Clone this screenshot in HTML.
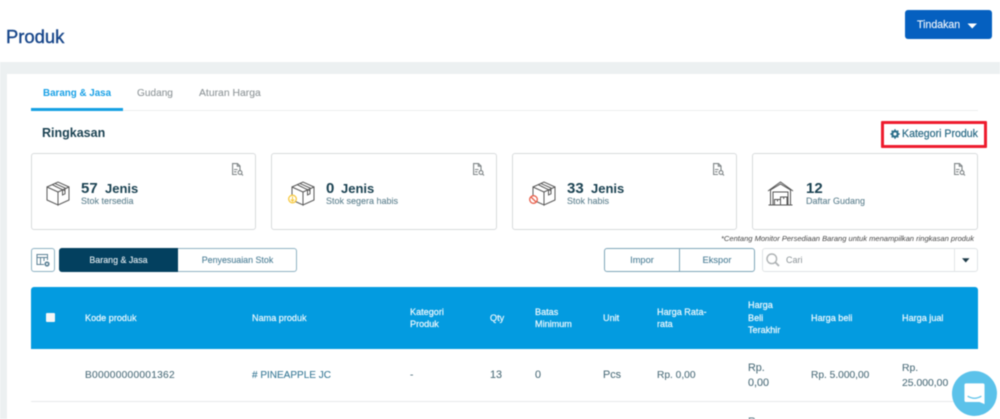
<!DOCTYPE html>
<html lang="id">
<head>
<meta charset="utf-8">
<title>Produk</title>
<style>
html,body{margin:0;padding:0;width:1000px;height:419px;overflow:hidden;background:#fff;font-family:"Liberation Sans",sans-serif}
#p{position:relative;width:1000px;height:419px;overflow:hidden;filter:blur(.4px)}
#p div,#p svg{position:absolute}
.t{white-space:nowrap;line-height:1}
.card{box-sizing:border-box;top:153px;height:77px;border:1px solid #d8dbdc;border-radius:3px;background:#fff}
.n{font-weight:bold;font-size:15px;color:#1b4252;top:181px}
.j{font-weight:bold;font-size:13px;color:#1b4252;top:182px}
.s{font-size:9px;color:#5f8290;top:197px;-webkit-text-stroke:.1px #5f8290}
.h{font-size:9.1px;color:#eef8fd;line-height:12.7px;white-space:nowrap;-webkit-text-stroke:.2px #eef8fd}
.c{font-size:10.2px;color:#4f6f7c;line-height:15px;white-space:nowrap;-webkit-text-stroke:.1px #4f6f7c}
.btn{box-sizing:border-box;top:248px;height:24px;border:1px solid #7fa7ba;text-align:center;font-size:9.3px;color:#4f8098;line-height:22px;-webkit-text-stroke:.1px #4f8098}
</style>
</head>
<body>
<div id="p">
<div style="left:0;top:62px;width:1000px;height:12px;background:#ecf0f1"></div>
<div style="left:0;top:62px;width:7px;height:357px;background:#ecf0f1"></div>

<div class="t" style="left:6px;top:28px;font-size:18.400px;color:#17468a;-webkit-text-stroke:.4px #17468a">Produk</div>
<div style="left:905px;top:10px;width:87px;height:29px;background:#0560c0;border-radius:3px"></div>
<div class="t" style="left:917px;top:19.500px;font-size:10.600px;color:#eef4fb;-webkit-text-stroke:.15px #eef4fb">Tindakan</div>
<svg style="left:967px;top:22.500px" width="11" height="6" viewBox="0 0 11 6"><path d="M0.500 0.500H10L5.200 5.500z" fill="#fff"/></svg>

<div class="t" style="left:43px;top:89px;font-size:9.800px;font-weight:bold;color:#18a0e6">Barang &amp; Jasa</div>
<div class="t" style="left:137px;top:89px;font-size:10.100px;color:#8f9699;-webkit-text-stroke:.1px #8f9699">Gudang</div>
<div class="t" style="left:199px;top:89px;font-size:10.400px;color:#8f9699;-webkit-text-stroke:.1px #8f9699">Aturan Harga</div>
<div style="left:31px;top:110px;width:947px;height:1px;background:#eceeef"></div>
<div style="left:31px;top:108px;width:92px;height:2.500px;background:#15a0e3"></div>

<div class="t" style="left:42px;top:127px;font-size:12.500px;font-weight:bold;color:#1b4252">Ringkasan</div>

<div style="box-sizing:border-box;left:881px;top:121px;width:106px;height:27px;border:3px solid #ee1c2e;border-radius:1px"></div>
<svg style="left:890px;top:129px" width="10" height="10" viewBox="0 0 10 10"><circle cx="5" cy="5" r="2.700" fill="none" stroke="#2a6f8a" stroke-width="2.200"/><path d="M5 .3V2M5 8V9.700M.3 5H2M8 5H9.700M1.700 1.700L3 3M7 7L8.300 8.300M8.300 1.700L7 3M3 7L1.700 8.300" stroke="#2a6f8a" stroke-width="1.500"/></svg>
<div class="t" style="left:902px;top:129px;font-size:10.600px;color:#2a6a85;-webkit-text-stroke:.2px #2a6a85">Kategori Produk</div>

<div class="card" style="left:31px;width:225px"></div>
<div class="card" style="left:271px;width:226px"></div>
<div class="card" style="left:512px;width:225px"></div>
<div class="card" style="left:752px;width:226px"></div>

<svg style="left:232px;top:163px" width="12" height="13" viewBox="0 0 12 13"><path d="M8 7.500V3L5.500 .6H.6V11.500H5M5.300 .6V3.200H8" fill="none" stroke="#7f8587" stroke-width="1.100"/><path d="M2 6.500H5.500M2 8.800H4.500" stroke="#7f8587" stroke-width="1.100"/><circle cx="8" cy="9.500" r="1.900" fill="#fff" stroke="#7f8587" stroke-width="1.100"/><path d="M9.400 10.900L11 12.500" stroke="#7f8587" stroke-width="1.100"/></svg>
<svg style="left:473px;top:163px" width="12" height="13" viewBox="0 0 12 13"><path d="M8 7.500V3L5.500 .6H.6V11.500H5M5.300 .6V3.200H8" fill="none" stroke="#7f8587" stroke-width="1.100"/><path d="M2 6.500H5.500M2 8.800H4.500" stroke="#7f8587" stroke-width="1.100"/><circle cx="8" cy="9.500" r="1.900" fill="#fff" stroke="#7f8587" stroke-width="1.100"/><path d="M9.400 10.900L11 12.500" stroke="#7f8587" stroke-width="1.100"/></svg>
<svg style="left:713px;top:163px" width="12" height="13" viewBox="0 0 12 13"><path d="M8 7.500V3L5.500 .6H.6V11.500H5M5.300 .6V3.200H8" fill="none" stroke="#7f8587" stroke-width="1.100"/><path d="M2 6.500H5.500M2 8.800H4.500" stroke="#7f8587" stroke-width="1.100"/><circle cx="8" cy="9.500" r="1.900" fill="#fff" stroke="#7f8587" stroke-width="1.100"/><path d="M9.400 10.900L11 12.500" stroke="#7f8587" stroke-width="1.100"/></svg>
<svg style="left:954px;top:163px" width="12" height="13" viewBox="0 0 12 13"><path d="M8 7.500V3L5.500 .6H.6V11.500H5M5.300 .6V3.200H8" fill="none" stroke="#7f8587" stroke-width="1.100"/><path d="M2 6.500H5.500M2 8.800H4.500" stroke="#7f8587" stroke-width="1.100"/><circle cx="8" cy="9.500" r="1.900" fill="#fff" stroke="#7f8587" stroke-width="1.100"/><path d="M9.400 10.900L11 12.500" stroke="#7f8587" stroke-width="1.100"/></svg>

<svg style="left:46px;top:181px" width="25" height="25" viewBox="0 0 25 25"><g fill="none" stroke="#5a5a5a" stroke-width="1"><path d="M1 6L12 11V24L1 19zM23 6L12 11V24L23 19zM1 6L12 1L23 6"/><path d="M6 3.500L16.500 8.800V14L19 12.800V7L8.500 2.300M9 5.200L19 9.800"/></g></svg>
<svg style="left:286px;top:181px" width="30" height="25" viewBox="0 0 30 25"><g fill="none" stroke="#5a5a5a" stroke-width="1"><path d="M6 6L17 11V24L6 19zM28 6L17 11V24L28 19zM6 6L17 1L28 6"/><path d="M11 3.500L21.500 8.800V14L24 12.800V7L13.500 2.300M14 5.200L24 9.800"/></g><circle cx="6.500" cy="18" r="3.800" fill="#fff" stroke="#f7c93e" stroke-width="1.300"/><path d="M6.500 15.500V20M4.800 18.500L6.500 20.300L8.200 18.500" fill="none" stroke="#f7c93e"/></svg>
<svg style="left:527px;top:181px" width="30" height="25" viewBox="0 0 30 25"><g fill="none" stroke="#5a5a5a" stroke-width="1"><path d="M6 6L17 11V24L6 19zM28 6L17 11V24L28 19zM6 6L17 1L28 6"/><path d="M11 3.500L21.500 8.800V14L24 12.800V7L13.500 2.300M14 5.200L24 9.800"/></g><circle cx="6.500" cy="18.500" r="3.800" fill="#fff" stroke="#e8604c" stroke-width="1.300"/><path d="M4 16L9 21" stroke="#e8604c" stroke-width="1.300"/></svg>
<svg style="left:767px;top:181px" width="27" height="25" viewBox="0 0 27 25"><g fill="none" stroke="#555" stroke-width="1"><path d="M1 10L13.500 1L26 10M3.500 24V9L13.500 3L23.500 9V24M6 24V11H21V24M1.500 24H25.500"/><rect x="7.500" y="18.500" width="6" height="5.500"/><rect x="13.500" y="16" width="6.500" height="8"/><path d="M10.500 18.500V20.500M16.700 16V18"/></g></svg>

<div class="t n" style="left:81px">57</div><div class="t j" style="left:105px">Jenis</div>
<div class="t s" style="left:81px">Stok tersedia</div>
<div class="t n" style="left:326px">0</div><div class="t j" style="left:341px">Jenis</div>
<div class="t s" style="left:326px">Stok segera habis</div>
<div class="t n" style="left:567px">33</div><div class="t j" style="left:591px">Jenis</div>
<div class="t s" style="left:567px">Stok habis</div>
<div class="t n" style="left:806px">12</div>
<div class="t s" style="left:806px">Daftar Gudang</div>

<div class="t" style="left:721px;top:234.500px;font-size:7.560px;font-style:italic;color:#444">*Centang Monitor Persediaan Barang untuk menampilkan ringkasan produk</div>

<div style="box-sizing:border-box;left:31px;top:248px;width:24px;height:24px;border:1px solid #8fb3c4;border-radius:3px"></div>
<svg style="left:36px;top:253px" width="15" height="15" viewBox="0 0 15 15"><g fill="none" stroke="#5d8296"><path d="M8 11.500H1V1.500H11.500V7M1 4.500H11.500M4.500 4.500V11.500M8 4.500V8"/><circle cx="11" cy="11" r="1.800" stroke-width="1.600"/></g></svg>

<div style="box-sizing:border-box;left:59px;top:248px;width:238px;height:24px;border:1px solid #8fb3c4;border-radius:3px;background:#fff"></div>
<div class="t" style="left:59px;top:248px;width:119px;height:24px;background:#03405f;border-radius:3px 0 0 3px;text-align:center;font-size:8.900px;color:#e8eff3;line-height:24px;-webkit-text-stroke:.1px #e8eff3">Barang &amp; Jasa</div>
<div class="t" style="left:178px;top:248px;width:119px;height:24px;text-align:center;font-size:8.900px;color:#4f8098;line-height:24px;-webkit-text-stroke:.1px #4f8098">Penyesuaian Stok</div>

<div class="btn t" style="left:604px;width:76px;border-radius:3px 0 0 3px">Impor</div>
<div class="btn t" style="left:679px;width:76px;border-radius:0 3px 3px 0">Ekspor</div>

<div style="box-sizing:border-box;left:762px;top:248px;width:216px;height:24px;border:1px solid #dfe3e5;border-radius:3px"></div>
<div style="left:954px;top:249px;width:1px;height:22px;background:#e3e6e7"></div>
<svg style="left:766px;top:253px" width="14" height="14" viewBox="0 0 14 14"><circle cx="5.800" cy="5.800" r="4.800" fill="none" stroke="#aeb2b4" stroke-width="1.400"/><path d="M9.300 9.300L13 13" stroke="#aeb2b4" stroke-width="1.800"/></svg>
<div class="t" style="left:786px;top:255.500px;font-size:9px;color:#8a9296">Cari</div>
<svg style="left:962px;top:258px" width="8" height="5" viewBox="0 0 8 5"><path d="M0 .3H7.500L3.750 4.500z" fill="#1d3a48"/></svg>

<div style="left:31px;top:287px;width:947px;height:62px;background:#039be0;border-radius:3px 3px 0 0"></div>
<div style="box-sizing:border-box;left:46px;top:313px;width:8.500px;height:8.500px;background:#f4f6f7;border-radius:1px"></div>
<div class="h" style="left:85px;top:312px">Kode produk</div>
<div class="h" style="left:252px;top:312px">Nama produk</div>
<div class="h" style="left:410px;top:305.500px">Kategori<br>Produk</div>
<div class="h" style="left:490px;top:312px">Qty</div>
<div class="h" style="left:535px;top:305.500px">Batas<br>Minimum</div>
<div class="h" style="left:603px;top:312px">Unit</div>
<div class="h" style="left:657px;top:305.500px">Harga Rata-<br>rata</div>
<div class="h" style="left:748px;top:299px">Harga<br>Beli<br>Terakhir</div>
<div class="h" style="left:811px;top:312px">Harga beli</div>
<div class="h" style="left:902px;top:312px">Harga jual</div>

<div class="c" style="left:85px;top:368px;letter-spacing:.25px">B00000000001362</div>
<div class="c" style="left:252px;top:368px;color:#3a7a97;font-size:10px;-webkit-text-stroke:.1px #3a7a97"># PINEAPPLE JC</div>
<div class="c" style="left:410px;top:368px">-</div>
<div class="c" style="left:490px;top:368px;font-size:10.800px">13</div>
<div class="c" style="left:535px;top:368px;font-size:10.800px">0</div>
<div class="c" style="left:603px;top:368px;font-size:10.800px">Pcs</div>
<div class="c" style="left:657px;top:368px">Rp. 0,00</div>
<div class="c" style="left:748px;top:361px;font-size:10.800px">Rp.<br>0,00</div>
<div class="c" style="left:811px;top:368px">Rp. 5.000,00</div>
<div class="c" style="left:902px;top:361px;font-size:10.400px">Rp.<br>25.000,00</div>
<div style="left:31px;top:401px;width:947px;height:1px;background:#e8eaeb"></div>
<div class="c" style="left:748px;top:415px;font-size:10.800px">Rp.</div>

<div style="left:952px;top:371px;width:45px;height:45px;border-radius:50%;background:#5bc2ea"></div>
<svg style="left:964px;top:383px" width="21" height="22" viewBox="0 0 23 26" preserveAspectRatio="none"><path d="M2.500 0.500H20.500Q22.500 .5 22.500 2.500V25L17 22.500H2.500Q.5 22.500 .5 20.500V2.500Q.5 .5 2.500 .5z" fill="#fff"/><path d="M4 15.500Q11.500 20.500 19 15.500" fill="none" stroke="#5bc2ea" stroke-width="1.500"/></svg>
</div>
</body>
</html>
